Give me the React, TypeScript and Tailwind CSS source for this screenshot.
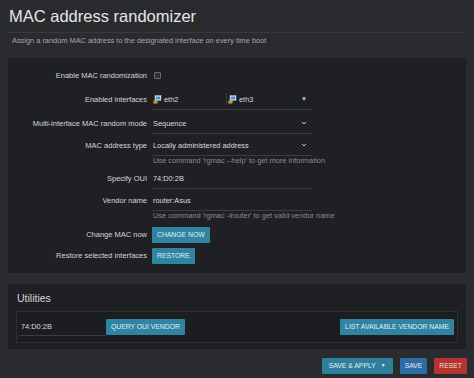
import React from "react";

const font = { fontFamily: '"Liberation Sans", Arial, sans-serif' };

function EthIcon() {
  return (
    <svg width="9" height="9" viewBox="0 0 9 9" className="shrink-0">
      <rect x="2" y="0.5" width="6" height="5" fill="#e8e8e8" stroke="#9aa4b0" strokeWidth="0.6" />
      <rect x="3" y="1.5" width="4" height="3" fill="#4a8fd8" />
      <rect x="0.5" y="5.5" width="4" height="3" fill="#d8b040" />
      <rect x="1.5" y="6.5" width="2" height="1" fill="#8a6a20" />
    </svg>
  );
}

function Chevron() {
  return (
    <svg width="6" height="4" viewBox="0 0 6 4" className="mr-[5px]">
      <path d="M1 1 L3 3 L5 1" stroke="#cfcfcf" strokeWidth="1" fill="none" />
    </svg>
  );
}

function Row({ label, mt, children }: { label: string; mt: string; children: React.ReactNode }) {
  return (
    <div className={`flex ${mt}`}>
      <div className="w-[144px] h-[20px] flex items-center justify-end pr-[5px] text-[7.5px] text-[#d4d4d4]">
        {label}
      </div>
      <div className="flex flex-col">{children}</div>
    </div>
  );
}

function Field({ children }: { children: React.ReactNode }) {
  return (
    <div className="w-[160px] h-[20px] flex items-center border-b border-[#3c3d41] text-[7.4px] text-[#dcdcdc] pl-[1px]">
      {children}
    </div>
  );
}

function Help({ text }: { text: string }) {
  return <div className="h-[10px] flex items-center text-[7.4px] text-[#8c8c8c] pl-[1px]">{text}</div>;
}

function Btn({ children, color }: { children: React.ReactNode; color: string }) {
  return (
    <button className={`h-[16px] px-[5px] text-[6.8px] text-[#e3eff4] rounded-[1px] ${color}`}>{children}</button>
  );
}

export default function App() {
  return (
    <div className="w-[474px] h-[378px] bg-[#2a2b2e] overflow-hidden" style={font}>
      <div className="w-[467px] pl-[8px]">
        <h1 className="text-[16.5px] leading-none text-[#e6e6e6] pt-[8px] pb-[7px] pl-[1px] border-b border-[#38393d] mr-[1px]">
          MAC address randomizer
        </h1>
        <p className="text-[7.4px] text-[#a8a8a8] pl-[4px] mt-[2px]">
          Assign a random MAC address to the designated interface on every time boot
        </p>

        {/* Main settings panel */}
        <div className="mt-[12px] mr-[1px] bg-[#1f2023] pt-[8px] pb-[7px] h-[215px]">
          <Row label="Enable MAC randomization" mt="mt-0">
            <div className="h-[20px] flex items-center pl-[2px]">
              <div className="w-[7px] h-[7px] border border-[#6a6b6f] bg-[#2e2f33] rounded-[1px]" />
            </div>
          </Row>
          <Row label="Enabled interfaces" mt="mt-[4px]">
            <Field>
              <div className="flex items-center gap-[2px] w-[73px]">
                <EthIcon />
                <span>eth2</span>
              </div>
              <div className="w-px h-[12px] bg-[#3a3b3f]" />
              <div className="flex items-center gap-[2px] pl-[1px] flex-1">
                <EthIcon />
                <span>eth3</span>
              </div>
              <span className="text-[6px] text-[#cfcfcf] pr-[5px]">▼</span>
            </Field>
          </Row>
          <Row label="Multi-interface MAC random mode" mt="mt-[4px]">
            <Field>
              <span className="flex-1">Sequence</span>
              <Chevron />
            </Field>
          </Row>
          <Row label="MAC address type" mt="mt-[2px]">
            <Field>
              <span className="flex-1">Locally administered address</span>
              <Chevron />
            </Field>
            <Help text="Use command 'rgmac --help' to get more information" />
          </Row>
          <Row label="Specify OUI" mt="mt-[3px]">
            <Field>74:D0:2B</Field>
          </Row>
          <Row label="Vendor name" mt="mt-[2px]">
            <Field>router:Asus</Field>
            <Help text="Use command 'rgmac -lrouter' to get valid vendor name" />
          </Row>
          <Row label="Change MAC now" mt="mt-[4px]">
            <div className="h-[20px] flex items-center">
              <Btn color="bg-[#2f84a1]">CHANGE NOW</Btn>
            </div>
          </Row>
          <Row label="Restore selected interfaces" mt="mt-[1px]">
            <div className="h-[20px] flex items-center">
              <Btn color="bg-[#2f84a1]">RESTORE</Btn>
            </div>
          </Row>
        </div>

        {/* Utilities panel */}
        <div className="mt-[11px] mr-[1px] bg-[#1f2023] h-[65px] px-[8px] pt-[7px]">
          <div className="text-[10.5px] leading-[14px] text-[#d6d6d6] pl-[1px]">Utilities</div>
          <div className="mt-[6px] border border-[#2f3034] bg-[#1c1d20] h-[32px] flex items-center px-[3px]">
            <div className="w-[86px] h-[18px] flex items-end pb-[3px] border-b border-[#3c3d41] text-[7.4px] text-[#dcdcdc] pl-[1px]">
              74:D0:2B
            </div>
            <Btn color="bg-[#2f84a1]">QUERY OUI VENDOR</Btn>
            <div className="flex-1" />
            <Btn color="bg-[#2f84a1]">LIST AVAILABLE VENDOR NAME</Btn>
          </div>
        </div>

        {/* Footer actions */}
        <div className="flex justify-end gap-[7px] mt-[9px]">
          <button className="h-[16px] px-[7px] text-[6.8px] text-[#e3eff4] bg-[#2f7f9c] rounded-[1px] flex items-center gap-[5px]">
            SAVE &amp; APPLY <span className="text-[5px]">▼</span>
          </button>
          <button className="h-[16px] px-[5px] text-[6.8px] text-[#e3eff4] bg-[#2e6aa3] rounded-[1px]">SAVE</button>
          <button className="h-[16px] px-[5px] text-[6.8px] text-[#f2dede] bg-[#b5352e] rounded-[1px]">RESET</button>
        </div>
      </div>
    </div>
  );
}
